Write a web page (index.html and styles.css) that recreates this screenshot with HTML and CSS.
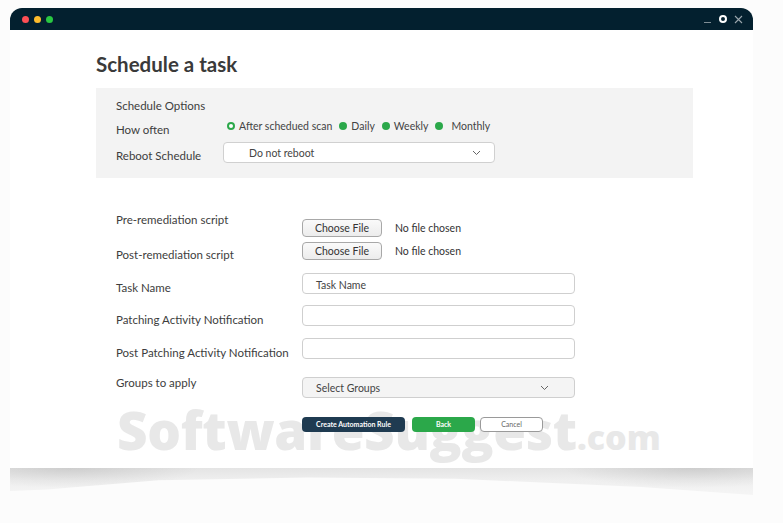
FILE: index.html
```html
<!DOCTYPE html>
<html lang="en">
<head>
  <meta charset="UTF-8" />
  <meta name="viewport" content="width=device-width, initial-scale=1.0"/>
  <title>Schedule a task</title>
  <link rel="stylesheet" href="styles.css">
</head>
<body>

<div class="window">
  <div class="titlebar">
    <span class="dot red"></span>
    <span class="dot yellow"></span>
    <span class="dot green"></span>
    <div class="controls">
      <span class="ctl-min"></span>
      <span class="ctl-max"></span>
      <svg class="ctl-close" width="9" height="9" viewBox="0 0 9 9"><path d="M1 1L8 8M8 1L1 8" stroke="#9aa6ad" stroke-width="1.1" fill="none"/></svg>
    </div>
  </div>

  <div class="content">
    <div class="watermark">SoftwareSuggest<span class="wm-com">.com</span></div>

    <h1 class="heading">Schedule a task</h1>

    <div class="panel">
      <div class="panel-title">Schedule Options</div>
      <div class="opt-row">
        <div class="opt-label">How often</div>
        <div class="radios">
          <span class="radio"><i class="dot-r ring"></i>After schedued scan</span>
          <span class="radio"><i class="dot-r"></i>Daily</span>
          <span class="radio"><i class="dot-r"></i>Weekly</span>
          <span class="radio wide"><i class="dot-r"></i>Monthly</span>
        </div>
      </div>
      <div class="opt-row reboot">
        <div class="opt-label">Reboot Schedule</div>
        <div class="select">
          <span>Do not reboot</span>
          <svg width="9" height="6" viewBox="0 0 9 6"><path d="M1 1l3.5 3.5L8 1" stroke="#666" stroke-width="1" fill="none"/></svg>
        </div>
      </div>
    </div>

    <div class="form">
      <div class="field first">
        <label>Pre-remediation script</label>
        <span class="file-btn">Choose File</span>
        <span class="file-none">No file chosen</span>
      </div>
      <div class="field gap5 low">
        <label>Post-remediation script</label>
        <span class="file-btn">Choose File</span>
        <span class="file-none">No file chosen</span>
      </div>
      <div class="field gap13 low">
        <label>Task Name</label>
        <div class="input">Task Name</div>
      </div>
      <div class="field gap11 low">
        <label>Patching Activity Notification</label>
        <div class="input"></div>
      </div>
      <div class="field gap12 low">
        <label>Post Patching Activity Notification</label>
        <div class="input"></div>
      </div>
      <div class="field gap18 high">
        <label>Groups to apply</label>
        <div class="input grey">
          <span>Select Groups</span>
          <svg width="9" height="6" viewBox="0 0 9 6"><path d="M1 1l3.5 3.5L8 1" stroke="#666" stroke-width="1" fill="none"/></svg>
        </div>
      </div>
      <div class="actions">
        <span class="btn btn-dark">Create Automation Rule</span>
        <span class="btn btn-green">Back</span>
        <span class="btn btn-light">Cancel</span>
      </div>
    </div>
  </div>
  <div class="window-shadow"></div>
</div>

</body>
</html>
```

FILE: styles.css
```css
body {
  margin: 0;
  background-color: #fcfcfc;
  font-family: 'Lato', 'Noto Sans', sans-serif;
  color: #3d3d3d;
}
.window {
  margin: 8px 0 0 10px;
  width: 743px;
}
.titlebar {
  height: 22px;
  background: #03202f;
  border-radius: 12px 12px 0 0;
  display: flex;
  align-items: center;
  padding-left: 12px;
}
.dot {
  width: 7px;
  height: 7px;
  border-radius: 50%;
  margin-right: 5px;
}
.red { background: #fc4f55; }
.yellow { background: #fdbc2c; }
.green { background: #29c842; }
.controls {
  margin-left: auto;
  margin-right: 10px;
  display: flex;
  align-items: center;
}
.ctl-min {
  width: 7px;
  height: 1px;
  background: #7f8d95;
  margin-top: 6px;
  margin-right: 8px;
}
.ctl-max {
  width: 4px;
  height: 4px;
  border: 2px solid #fff;
  border-radius: 50%;
  margin-right: 7px;
}
.content {
  position: relative;
  height: 438px;
  background: #fff;
  padding: 20px 0 0 86px;
  box-sizing: border-box;
  overflow: hidden;
}
.watermark {
  position: absolute;
  left: 107px;
  top: 363px;
  font-family: 'Open Sans', 'Noto Sans', sans-serif;
  font-weight: 800;
  font-size: 53px;
  letter-spacing: -0.3px;
  color: #e8e8e8;
  white-space: nowrap;
}
.wm-com {
  font-size: 34px;
  letter-spacing: 0;
}
.heading {
  position: relative;
  margin: 0;
  font-size: 20.5px;
  line-height: 28px;
  font-weight: bold;
  color: #3a3a3a;
}
.panel {
  position: relative;
  margin-top: 10px;
  width: 597px;
  height: 90px;
  background: #f3f3f3;
  padding: 9px 0 0 20px;
  box-sizing: border-box;
}
.panel-title {
  font-size: 11.5px;
  line-height: 18px;
  margin-bottom: 4px;
}
.opt-row {
  display: flex;
  align-items: center;
  height: 20px;
  font-size: 11.5px;
}
.opt-row.reboot {
  margin-top: 3px;
  height: 21px;
}
.opt-label {
  width: 107px;
}
.reboot .opt-label {
  margin-top: 3px;
  margin-bottom: -3px;
}
.radios {
  display: flex;
  align-items: center;
  padding-left: 4px;
  margin-bottom: 6px;
  font-size: 10.5px;
  color: #444;
}
.radio {
  display: flex;
  align-items: center;
  margin-right: 7px;
}
.dot-r {
  width: 8px;
  height: 8px;
  border-radius: 50%;
  background: #2ba84a;
  margin-right: 4px;
  box-sizing: border-box;
}
.dot-r.ring {
  background: #fff;
  border: 2px solid #2ba84a;
}
.radio.wide .dot-r {
  margin-right: 8px;
}
.select {
  width: 272px;
  height: 21px;
  background: #fff;
  border: 1px solid #d0d0d0;
  border-radius: 4px;
  box-sizing: border-box;
  display: flex;
  align-items: center;
  justify-content: space-between;
  padding: 0 13px 0 25px;
  font-size: 10.5px;
  color: #444;
}
.form {
  position: relative;
  padding-left: 20px;
  margin-top: 41px;
}
.field {
  display: flex;
  align-items: center;
  font-size: 11.5px;
}
.field label {
  width: 186px;
  flex-shrink: 0;
  line-height: 16px;
}
.field.first label {
  margin-top: -16px;
}
.field.low label {
  margin-top: 4px;
  margin-bottom: -4px;
}
.field.high label {
  margin-top: -5px;
  margin-bottom: 5px;
}
.gap5 { margin-top: 5px; }
.gap11 { margin-top: 11px; }
.gap12 { margin-top: 12px; }
.gap13 { margin-top: 13px; }
.gap18 { margin-top: 18px; }
.file-btn {
  width: 80px;
  height: 18px;
  box-sizing: border-box;
  border: 1px solid #a8a8a8;
  border-radius: 4px;
  background: linear-gradient(#fafafa, #ececec);
  font-size: 10.5px;
  line-height: 16px;
  text-align: center;
  color: #333;
}
.file-none {
  margin-left: 13px;
  font-size: 10.5px;
  color: #333;
}
.input {
  width: 273px;
  height: 21px;
  box-sizing: border-box;
  border: 1px solid #cfcfcf;
  border-radius: 4px;
  background: #fff;
  padding: 0 25px 0 13px;
  font-size: 10.5px;
  line-height: 22px;
  color: #444;
}
.input.grey {
  background: #f4f4f4;
  display: flex;
  align-items: center;
  justify-content: space-between;
}
.actions {
  display: flex;
  margin-top: 19px;
  padding-left: 186px;
}
.btn {
  height: 15px;
  box-sizing: border-box;
  border-radius: 4px;
  font-size: 7px;
  line-height: 15px;
  text-align: center;
  font-weight: bold;
  color: #fff;
  margin-right: 6px;
}
.btn-dark {
  width: 103px;
  background: #1f3b51;
  margin-right: 7px;
}
.btn-green {
  width: 63px;
  background: #2ba84a;
  margin-right: 5px;
}
.btn-light {
  width: 63px;
  background: #fff;
  border: 1px solid #9a9a9a;
  color: #666;
  font-weight: normal;
  line-height: 13px;
}
.window-shadow {
  height: 27px;
  background:
    radial-gradient(ellipse 130px 20px at 60px 0, rgba(0,0,0,0.1), transparent),
    radial-gradient(ellipse 130px 20px at 683px 0, rgba(0,0,0,0.1), transparent),
    linear-gradient(#e4e4e4, #efefef 45%, #f5f5f5);
  clip-path: polygon(0 0, 100% 0, 100% 100%, 85% 70%, 60% 40%, 40% 35%, 20% 45%, 5% 80%, 0 85%);
}
```
